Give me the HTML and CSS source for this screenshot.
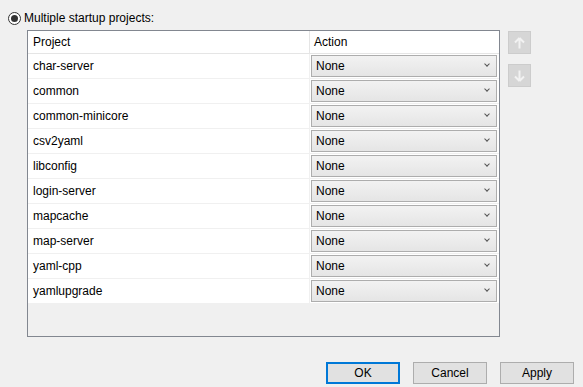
FILE: index.html
```html
<!DOCTYPE html>
<html lang="en">
<head>
    <meta charset="UTF-8">
    <title>Startup Projects</title>
    <link rel="stylesheet" href="styles.css">
</head>
<body>
    <label class="radio-row">
        <span class="radio"><span class="radio-dot"></span></span>
        <span>Multiple startup projects:</span>
    </label>

    <div class="main">
        <div class="grid">
            <div class="grid-head">
                <div class="col-project">Project</div>
                <div class="col-action">Action</div>
            </div>
            <div class="grid-row"><div class="col-project">char-server</div><div class="col-action"><div class="combo">None<span class="chev"></span></div></div></div>
            <div class="grid-row"><div class="col-project">common</div><div class="col-action"><div class="combo">None<span class="chev"></span></div></div></div>
            <div class="grid-row"><div class="col-project">common-minicore</div><div class="col-action"><div class="combo">None<span class="chev"></span></div></div></div>
            <div class="grid-row"><div class="col-project">csv2yaml</div><div class="col-action"><div class="combo">None<span class="chev"></span></div></div></div>
            <div class="grid-row"><div class="col-project">libconfig</div><div class="col-action"><div class="combo">None<span class="chev"></span></div></div></div>
            <div class="grid-row"><div class="col-project">login-server</div><div class="col-action"><div class="combo">None<span class="chev"></span></div></div></div>
            <div class="grid-row"><div class="col-project">mapcache</div><div class="col-action"><div class="combo">None<span class="chev"></span></div></div></div>
            <div class="grid-row"><div class="col-project">map-server</div><div class="col-action"><div class="combo">None<span class="chev"></span></div></div></div>
            <div class="grid-row"><div class="col-project">yaml-cpp</div><div class="col-action"><div class="combo">None<span class="chev"></span></div></div></div>
            <div class="grid-row"><div class="col-project">yamlupgrade</div><div class="col-action"><div class="combo">None<span class="chev"></span></div></div></div>
        </div>

        <div class="side-buttons">
            <button class="move-btn" disabled>
                <svg width="11" height="12" viewBox="0 0 11 12"><path d="M5.5 1 L1 5.5 M5.5 1 L10 5.5 M5.5 1 V11.5" stroke="#f2f2f2" stroke-width="2" fill="none"/></svg>
            </button>
            <button class="move-btn" disabled>
                <svg width="11" height="12" viewBox="0 0 11 12"><path d="M5.5 11 L1 6.5 M5.5 11 L10 6.5 M5.5 11 V0.5" stroke="#f2f2f2" stroke-width="2" fill="none"/></svg>
            </button>
        </div>
    </div>

    <div class="footer">
        <button class="dlg-btn default">OK</button>
        <button class="dlg-btn">Cancel</button>
        <button class="dlg-btn">Apply</button>
    </div>
</body>
</html>
```

FILE: styles.css
```css
body {
    margin: 0;
    width: 583px;
    height: 387px;
    background-color: #f0f0f0;
    font-family: 'Liberation Sans', Arial, sans-serif;
    font-size: 12px;
    color: #000;
    overflow: hidden;
}
.radio-row {
    display: flex;
    align-items: center;
    gap: 3px;
    height: 16px;
    padding: 10px 0 0 8px;
}
.radio {
    width: 11px;
    height: 11px;
    border: 1px solid #333;
    border-radius: 50%;
    background-color: #fff;
    display: flex;
    align-items: center;
    justify-content: center;
}
.radio-dot {
    width: 7px;
    height: 7px;
    border-radius: 50%;
    background-color: #333;
}
.main {
    display: flex;
    align-items: flex-start;
    margin: 4px 0 0 27px;
}
.grid {
    width: 471px;
    height: 305px;
    border: 1px solid #828790;
}
.grid-head {
    display: flex;
    height: 22px;
    background-color: #fff;
    border-bottom: 1px solid #e5e5e5;
}
.grid-head .col-project {
    width: 282px;
    padding: 1px 0 0 5px;
    border-right: 1px solid #e5e5e5;
    line-height: 21px;
    box-sizing: border-box;
}
.grid-head .col-action {
    padding: 1px 0 0 4px;
    line-height: 21px;
}
.grid-row {
    display: flex;
    height: 24px;
    border-bottom: 1px solid #f0f0f0;
}
.grid-row .col-project {
    width: 282px;
    padding: 1px 0 0 5px;
    background-color: #fff;
    border-right: 1px solid #f0f0f0;
    line-height: 23px;
    box-sizing: border-box;
}
.grid-row .col-action {
    flex: 1;
    background-color: #fff;
    padding: 1px 2px 0 1px;
}
.combo {
    position: relative;
    height: 20px;
    border: 1px solid #adadad;
    background: linear-gradient(#f2f2f2, #e5e5e5);
    padding-left: 4px;
    line-height: 21px;
}
.chev {
    position: absolute;
    right: 7px;
    top: 6px;
    width: 3px;
    height: 3px;
    border-right: 1px solid #555;
    border-bottom: 1px solid #555;
    transform: rotate(45deg);
}
.side-buttons {
    display: flex;
    flex-direction: column;
    gap: 10px;
    margin: 1px 0 0 8px;
}
.move-btn {
    width: 23px;
    height: 23px;
    padding: 0;
    border: 1px solid #cccccc;
    background-color: #d6d6d6;
    display: flex;
    align-items: center;
    justify-content: center;
}
.footer {
    display: flex;
    justify-content: flex-end;
    gap: 13px;
    padding: 25px 9px 0 0;
}
.dlg-btn {
    width: 74px;
    height: 22px;
    padding: 0;
    border: 1px solid #adadad;
    background-color: #e1e1e1;
    font-family: 'Liberation Sans', Arial, sans-serif;
    font-size: 12px;
    color: #000;
}
.dlg-btn.default {
    border: 2px solid #0078d7;
}
```
